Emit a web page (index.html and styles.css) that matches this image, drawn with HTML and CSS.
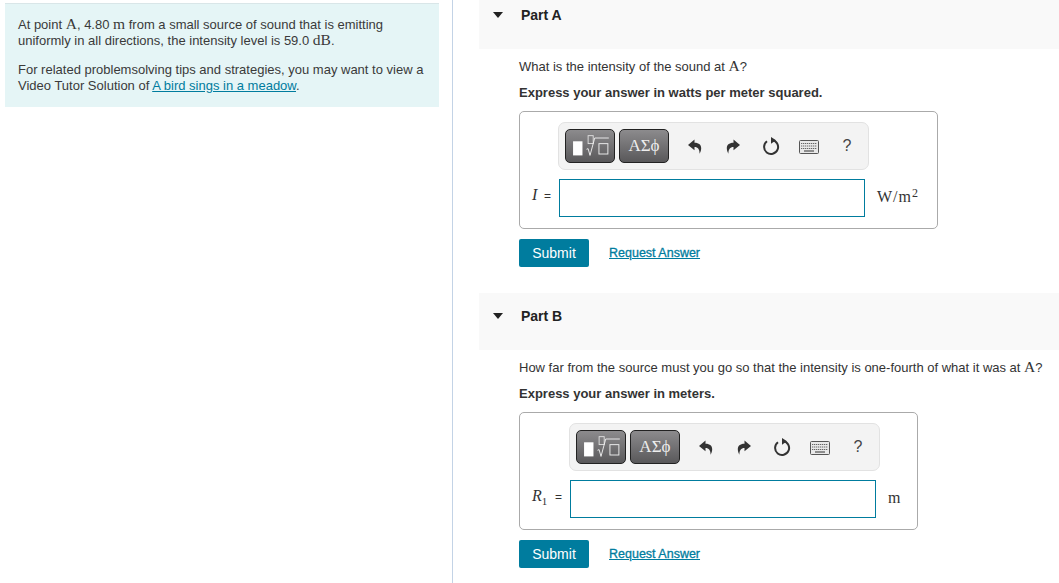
FILE: index.html
```html
<!DOCTYPE html>
<html lang="en">
<head>
<meta charset="utf-8">
<title>Part A and Part B</title>
<link rel="stylesheet" href="styles.css">
</head>
<body>
<svg class="defs" width="0" height="0" aria-hidden="true">
  <symbol id="arrow" viewBox="0 0 14 15"><path d="M6.5 .5 L0 6 L6.5 11.2 V8 C10 8 11.6 10.2 11.6 14.8 C14.6 9 13.6 3.8 6.5 3.8 Z"/></symbol>
  <symbol id="reset" viewBox="0 0 18 18"><path d="M10 3 A7 7 0 1 1 5 4.26" fill="none" stroke="#333" stroke-width="2"/><path d="M9 0 L14 3.3 L9 6.8 Z" fill="#333"/></symbol>
  <symbol id="keyboard" viewBox="0 0 20 14">
    <rect x="0.5" y="0.5" width="19" height="13" rx="1" fill="#e8e8e8" stroke="#555"/>
    <path d="M2 3.5H18M2 6H18M2 8.5H18" stroke="#666" stroke-width="1.2" stroke-dasharray="1.3 .7"/>
    <path d="M5 11H15" stroke="#666" stroke-width="1.4"/>
  </symbol>
  <symbol id="templates" viewBox="0 0 50 34">
    <rect x="7" y="12" width="10" height="15" fill="#fff"/>
    <rect x="23" y="6" width="5.4" height="8.4" fill="none" stroke="#ddd"/>
    <path d="M21.3 20.5 L23 19.8 L25 27 L30 8.5 H45" fill="none" stroke="#eee"/>
    <rect x="34.5" y="14.5" width="9.5" height="11" fill="none" stroke="#eee"/>
  </symbol>
</svg>
<div class="page">
  <aside class="intro">
    <div class="note">
      <p>At point <span class="math">A</span>, 4.80 <span class="math">m</span> from a small source of sound that is emitting uniformly in all directions, the intensity level is 59.0 <span class="math">dB</span>.</p>
      <p>For related problemsolving tips and strategies, you may want to view a Video Tutor Solution of <a href="#">A bird sings in a meadow</a>.</p>
    </div>
  </aside>
  <main class="parts">
    <section class="part">
      <h2 class="part-head part-head-first"><span class="caret"></span>Part A</h2>
      <div class="part-body">
        <p class="question">What is the intensity of the sound at <span class="math">A</span>?</p>
        <p class="instruction">Express your answer in watts per meter squared.</p>
        <div class="answer">
          <div class="toolbar">
            <button class="tool" type="button"><svg class="tool-icon"><use href="#templates"/></svg></button>
            <button class="tool tool-greek" type="button">ΑΣϕ</button>
            <span class="actions">
              <span class="action"><svg class="arrow"><use href="#arrow"/></svg></span>
              <span class="action"><svg class="arrow flip"><use href="#arrow"/></svg></span>
              <span class="action"><svg class="reset"><use href="#reset"/></svg></span>
              <span class="action"><svg class="keys"><use href="#keyboard"/></svg></span>
              <span class="action help">?</span>
            </span>
          </div>
          <label class="var"><i class="math">I</i> <span class="eq">=</span></label>
          <div class="field"></div>
          <span class="unit math">W/m<sup>2</sup></span>
        </div>
        <div class="submit-row">
          <button class="submit" type="button">Submit</button>
          <a class="request" href="#">Request Answer</a>
        </div>
      </div>
    </section>
    <section class="part">
      <h2 class="part-head part-head-second"><span class="caret"></span>Part B</h2>
      <div class="part-body">
        <p class="question">How far from the source must you go so that the intensity is one-fourth of what it was at <span class="math">A</span>?</p>
        <p class="instruction">Express your answer in meters.</p>
        <div class="answer">
          <div class="toolbar">
            <button class="tool" type="button"><svg class="tool-icon"><use href="#templates"/></svg></button>
            <button class="tool tool-greek" type="button">ΑΣϕ</button>
            <span class="actions">
              <span class="action"><svg class="arrow"><use href="#arrow"/></svg></span>
              <span class="action"><svg class="arrow flip"><use href="#arrow"/></svg></span>
              <span class="action"><svg class="reset"><use href="#reset"/></svg></span>
              <span class="action"><svg class="keys"><use href="#keyboard"/></svg></span>
              <span class="action help">?</span>
            </span>
          </div>
          <label class="var"><i class="math">R</i><sub class="math">1</sub> <span class="eq">=</span></label>
          <div class="field"></div>
          <span class="unit math">m</span>
        </div>
        <div class="submit-row">
          <button class="submit" type="button">Submit</button>
          <a class="request" href="#">Request Answer</a>
        </div>
      </div>
    </section>
  </main>
</div>
</body>
</html>
```

FILE: styles.css
```css
* { box-sizing: border-box; }
html, body { margin: 0; height: 100%; overflow: hidden; }
body {
  font-family: "Liberation Sans", Arial, sans-serif;
  font-size: 13px;
  line-height: 16px;
  color: #333;
  background: #fff;
}
.defs { position: absolute; }
.page { display: flex; height: 583px; }

.intro {
  width: 453px;
  flex: none;
  padding: 3px 13px 0 5px;
  border-right: 1px solid #c3d3e6;
}
.note {
  background: #e5f5f6;
  border-top: 1px solid #d9e6e8;
  padding: 13px 13px 13px;
  color: #3a3a3a;
}
.note p { margin: 0 0 13px; }
.note p:last-child { margin: 0; }
.note a { color: #007c9e; text-decoration: underline; }
.math {
  font-family: "Liberation Serif", "Times New Roman", serif;
  font-size: 15.5px;
  line-height: 0;
}

.parts { flex: 1; min-width: 0; padding-left: 26px; }
.part-head {
  display: flex;
  align-items: center;
  margin: 0;
  padding-left: 14px;
  background: #f9f9f9;
  font-size: 14px;
  line-height: 16px;
  font-weight: bold;
  color: #222;
}
.part-head-first { height: 49px; padding-bottom: 19px; }
.part-head-second { height: 57px; padding-bottom: 11px; }
.caret {
  width: 0;
  height: 0;
  margin-right: 18px;
  border-left: 5.5px solid transparent;
  border-right: 5.5px solid transparent;
  border-top: 6px solid #222;
}
.part-body { padding: 10px 0 26px 40px; }
.question { margin: 0; white-space: nowrap; }
.instruction { margin: 10px 0; font-weight: bold; }

.answer {
  display: inline-grid;
  grid-template-columns: auto 306px auto;
  align-items: center;
  padding: 10px 16px 11px 12px;
  border: 1px solid #aaa;
  border-radius: 5px;
  vertical-align: top;
}
.toolbar {
  grid-column: 2;
  width: 311px;
  height: 48px;
  margin: 0 0 9px -1px;
  padding: 6px;
  display: flex;
  background: #f3f3f3;
  border: 1px solid #e2e2e2;
  border-radius: 7px;
}
.tool {
  width: 50px;
  height: 34px;
  padding: 0;
  margin-right: 4px;
  flex: none;
  border: 1px solid #222;
  border-radius: 5px;
  background: linear-gradient(#8c8b8d, #59585a);
  color: #eee;
}
.tool-icon { display: block; width: 48px; height: 32px; }
.tool-greek {
  font-family: "Liberation Serif", serif;
  font-size: 17px;
}
.actions { display: flex; margin-left: 3px; }
.action {
  width: 38px;
  display: flex;
  align-items: center;
  justify-content: center;
  fill: #333;
}
.arrow { width: 14px; height: 15px; }
.flip { transform: scaleX(-1); }
.reset { width: 18px; height: 18px; }
.keys { width: 20px; height: 14px; margin-top: 2px; }
.help { font-size: 16px; color: #444; }

.var { grid-column: 1; margin: 0 8px 4px 0; white-space: nowrap; }
.var .math { font-size: 16px; }
.var sub.math { font-size: 11px; margin-right: 1px; }
.eq { font-size: 12px; margin-left: 3px; }
.field {
  grid-column: 2;
  height: 38px;
  background: #fff;
  border: 1px solid #007c9e;
}
.unit {
  grid-column: 3;
  margin: 0 0 3px 12px;
  font-size: 16px;
  letter-spacing: 1px;
  line-height: 16px;
  color: #333;
  white-space: nowrap;
}
.unit sup {
  font-size: 12px;
  line-height: 0;
  vertical-align: 5px;
  margin-right: 2px;
}

.submit-row { display: flex; align-items: center; gap: 20px; margin-top: 10px; }
.submit {
  width: 70px;
  height: 28px;
  padding: 0;
  border: 0;
  border-radius: 2px;
  background: #007c9e;
  color: #fff;
  font: 14px/16px "Liberation Sans", Arial, sans-serif;
}
.request {
  color: #007c9e;
  font-size: 12.5px;
  text-decoration: underline;
  -webkit-text-stroke: .3px #007c9e;
}
```
